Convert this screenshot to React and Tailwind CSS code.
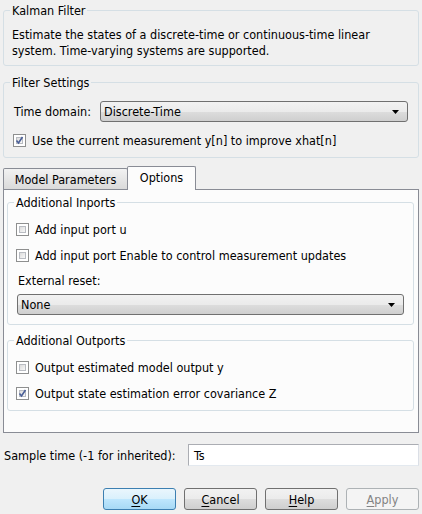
import React from 'react';

// Windows 7 style dialog chrome
const Checkbox = ({ checked }) => (
  <span className="relative inline-block w-[13px] h-[13px] border border-[#8e8f8f] bg-white shrink-0">
    <span className="absolute inset-[2px] border border-[#b9bcc2] bg-gradient-to-br from-[#dcdcdc] to-[#f8f8f8]" />
    {checked && (
      <svg className="absolute inset-0" width="11" height="11" viewBox="0 0 11 11">
        <path d="M2.5 5.5 L4.5 8 L8.5 2" fill="none" stroke="#4a5f97" strokeWidth="1.6" />
      </svg>
    )}
  </span>
);

const CheckRow = ({ checked, label, className = '' }) => (
  <div className={`flex items-center h-[13px] ${className}`}>
    <Checkbox checked={checked} />
    <span className="ml-[6px] leading-[13px] whitespace-nowrap">{label}</span>
  </div>
);

const DropDown = ({ value, className = '' }) => (
  <div
    className={`h-[21px] rounded-[3px] border border-[#707070] flex items-center pl-[3px] pr-[8px] bg-[linear-gradient(#f2f2f2_0%,#ebebeb_50%,#dddddd_51%,#cfcfcf_100%)] ${className}`}
  >
    <span className="flex-1 leading-[13px]">{value}</span>
    <svg width="7" height="4" viewBox="0 0 7 4">
      <path d="M0 0 H7 L3.5 4 Z" fill="#000" />
    </svg>
  </div>
);

const Group = ({ title, className = '', children }) => (
  <fieldset className={`border border-[#d5dfe5] rounded-[3px] px-[6px] ${className}`}>
    <legend className="px-[2px] h-[13px] leading-[13px] whitespace-nowrap">{title}</legend>
    {children}
  </fieldset>
);

const Button = ({ children, mnemonic, variant }) => {
  const styles = {
    default:
      'border-[#3c7fb1] bg-[linear-gradient(#eaf6fd_0%,#d9f0fc_50%,#bee6fd_51%,#a7d9f5_100%)] text-black',
    normal:
      'border-[#707070] bg-[linear-gradient(#f2f2f2_0%,#ebebeb_50%,#dddddd_51%,#cfcfcf_100%)] text-black',
    disabled: 'border-[#adb2b5] bg-[#f4f4f4] text-[#838383]',
  };
  return (
    <div
      className={`w-[73px] h-[22px] rounded-[3px] border flex items-center justify-center leading-[13px] ${styles[variant]}`}
    >
      <span>
        <span className="underline underline-offset-2">{mnemonic}</span>
        {children}
      </span>
    </div>
  );
};

export default function App() {
  return (
    <div className="w-[422px] h-[514px] overflow-hidden bg-[#f0f0f0] pt-[4px] px-[3px] text-[12.5px] text-black font-['DejaVu_Sans_Condensed','DejaVu_Sans',sans-serif] flex flex-col">
      <Group title="Kalman Filter" className="pb-[6px]">
        <p className="mt-[10px] leading-[16px] pl-[2px]">
          Estimate the states of a discrete-time or continuous-time linear
          <br />
          system. Time-varying systems are supported.
        </p>
      </Group>

      <Group title="Filter Settings" className="mt-[10px] pb-[10px] pr-[10px]">
        <div className="mt-[12px] flex items-center pl-[4px]">
          <span className="w-[86px] leading-[13px]">Time domain:</span>
          <DropDown value="Discrete-Time" className="flex-1" />
        </div>
        <CheckRow
          checked
          label="Use the current measurement y[n] to improve xhat[n]"
          className="mt-[12px] pl-[3px]"
        />
      </Group>

      <div className="mt-[7px] flex items-end h-[24px]">
        <div className="w-[125px] h-[21px] border border-b-0 border-[#898c95] rounded-t-[2px] bg-[linear-gradient(#f2f2f2,#dadada)] flex items-center justify-center leading-[13px]">
          Model Parameters
        </div>
        <div className="relative z-10 -ml-[1px] w-[69px] h-[24px] -mb-[1px] border border-b-0 border-[#898c95] rounded-t-[2px] bg-[#fcfcfc] flex items-center justify-center leading-[13px] pb-[2px]">
          Options
        </div>
      </div>

      <div className="h-[244px] border border-[#898c95] bg-[#fcfcfc] pt-[6px] pl-[3px]">
        <Group title="Additional Inports" className="w-[407px] pb-[9px] pr-[9px]">
          <CheckRow label="Add input port u" className="mt-[14px] pl-[2px]" />
          <CheckRow
            label="Add input port Enable to control measurement updates"
            className="mt-[13px] pl-[2px]"
          />
          <div className="mt-[12px] leading-[13px] pl-[4px]">External reset:</div>
          <DropDown value="None" className="mt-[7px] ml-[3px]" />
        </Group>

        <Group title="Additional Outports" className="mt-[9px] w-[407px] pb-[10px]">
          <CheckRow label="Output estimated model output y" className="mt-[14px] pl-[2px]" />
          <CheckRow
            checked
            label="Output state estimation error covariance Z"
            className="mt-[13px] pl-[2px]"
          />
        </Group>
      </div>

      <div className="mt-[11px] flex items-center pl-[1px]">
        <span className="flex-1 leading-[13px]">Sample time (-1 for inherited):</span>
        <div className="w-[231px] h-[22px] border border-[#abadb3] border-b-[#e3e9ef] border-r-[#dbdfe6] bg-white flex items-center pl-[5px] leading-[13px]">
          Ts
        </div>
      </div>

      <div className="mt-[22px] flex justify-end gap-[8px]">
        <Button variant="default" mnemonic="O">K</Button>
        <Button variant="normal" mnemonic="C">ancel</Button>
        <Button variant="normal" mnemonic="H">elp</Button>
        <Button variant="disabled" mnemonic="A">pply</Button>
      </div>
    </div>
  );
}
